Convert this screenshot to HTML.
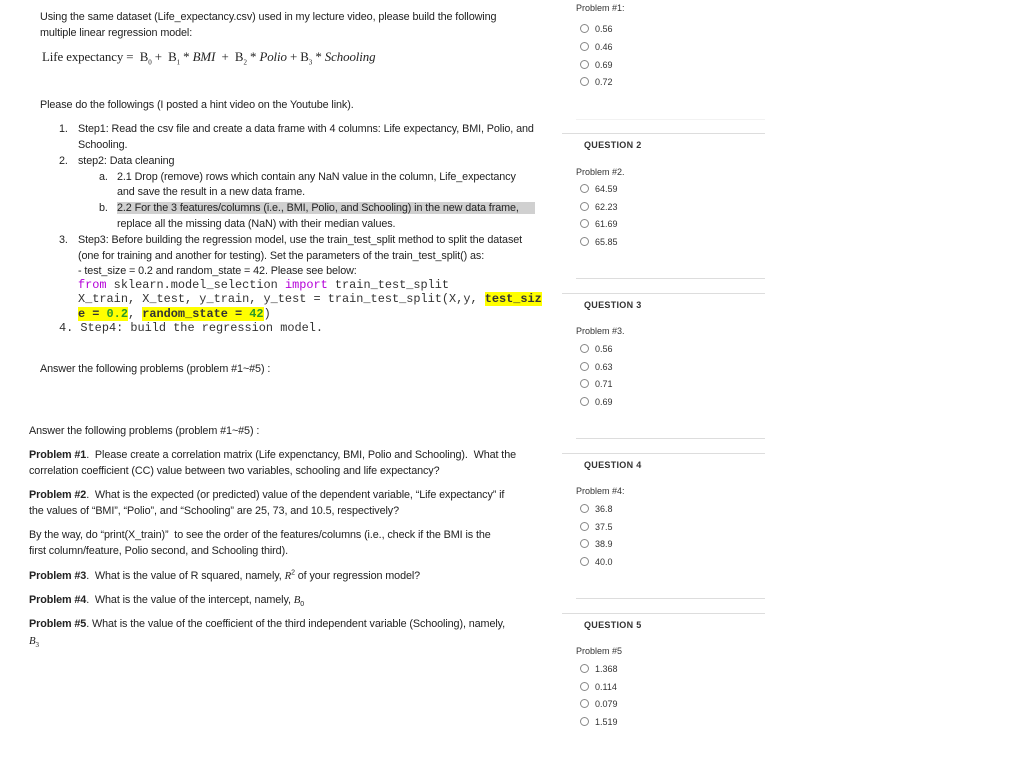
<!DOCTYPE html>
<html><head><meta charset="utf-8"><style>
body{margin:0;width:1024px;height:768px;background:#fff;position:relative;overflow:hidden;font-family:"Liberation Sans",sans-serif;color:#222}
.t{position:absolute;white-space:nowrap;font-size:10.8px;line-height:12px;color:#222;letter-spacing:-0.1px}
.m{position:absolute;white-space:nowrap;font-family:"Liberation Mono",monospace;font-size:11.9px;line-height:13px;color:#333}
.r{position:absolute;white-space:nowrap;font-size:9px;line-height:11px;color:#333}
.q{position:absolute;white-space:nowrap;font-size:9px;font-weight:bold;color:#333;letter-spacing:.3px}
.rad{display:inline-block;width:7px;height:7px;border:1px solid #888;border-radius:50%;vertical-align:-1px;margin-right:6px}
.ln{position:absolute;height:1px;background:#ddd}
.hl{background:#d0d0d0}
.y{background:#ffff00;font-weight:bold}
.p{color:#b400d8}.g{color:#2a9a2a}
.f{font-family:"Liberation Serif",serif}
sub,sup{font-size:7px;line-height:0}
</style></head><body>
<div class="t" style="left:40px;top:11px">Using the same dataset (Life_expectancy.csv) used in my lecture video, please build the following</div>
<div class="t" style="left:40px;top:27px">multiple linear regression model:</div>
<div class="t f" style="left:42px;top:50px;font-size:12.9px;line-height:14px">Life expectancy =&nbsp; B<sub>0</sub> + &nbsp;B<sub>1</sub> * <i>BMI</i> &nbsp;+ &nbsp;B<sub>2</sub> * <i>Polio</i> + B<sub>3</sub> * <i>Schooling</i></div>
<div class="t" style="left:40px;top:99px">Please do the followings (I posted a hint video on the Youtube link).</div>
<div class="t" style="left:59px;top:123px">1.</div><div class="t" style="left:78px;top:123px">Step1: Read the csv file and create a data frame with 4 columns: Life expectancy, BMI, Polio, and</div>
<div class="t" style="left:78px;top:139px">Schooling.</div>
<div class="t" style="left:59px;top:155px">2.</div><div class="t" style="left:78px;top:155px">step2: Data cleaning</div>
<div class="t" style="left:99px;top:171px">a.</div><div class="t" style="left:117px;top:171px">2.1 Drop (remove) rows which contain any NaN value in the column, Life_expectancy</div>
<div class="t" style="left:117px;top:186px">and save the result in a new data frame.</div>
<div class="t" style="left:99px;top:202px">b.</div><div class="t hl" style="left:117px;top:202px;width:418px">2.2 For the 3 features/columns (i.e., BMI, Polio, and Schooling) in the new data frame,</div>
<div class="t" style="left:117px;top:218px">replace all the missing data (NaN) with their median values.</div>
<div class="t" style="left:59px;top:234px">3.</div><div class="t" style="left:78px;top:234px">Step3: Before building the regression model, use the train_test_split method to split the dataset</div>
<div class="t" style="left:78px;top:250px">(one for training and another for testing). Set the parameters of the train_test_split() as:</div>
<div class="t" style="left:78px;top:265px">- test_size = 0.2 and random_state = 42. Please see below:</div>
<div class="m" style="left:78px;top:279px"><span class="p">from</span> sklearn.model_selection <span class="p">import</span> train_test_split</div>
<div class="m" style="left:78px;top:293px">X_train, X_test, y_train, y_test = train_test_split(X,y, <span class="y">test_siz</span></div>
<div class="m" style="left:78px;top:308px"><span class="y">e = <span class="g">0.2</span></span>, <span class="y">random_state = <span class="g">42</span></span>)</div>
<div class="m" style="left:59px;top:322px">4. Step4: build the regression model.</div>
<div class="t" style="left:40px;top:363px">Answer the following problems (problem #1~#5) :</div>
<div class="t" style="left:29px;top:425px">Answer the following problems (problem #1~#5) :</div>
<div class="t" style="left:29px;top:449px"><b>Problem #1</b>.&nbsp; Please create a correlation matrix (Life expenctancy, BMI, Polio and Schooling).&nbsp; What the</div>
<div class="t" style="left:29px;top:465px">correlation coefficient (CC) value between two variables, schooling and life expectancy?</div>
<div class="t" style="left:29px;top:489px"><b>Problem #2</b>.&nbsp; What is the expected (or predicted) value of the dependent variable, “Life expectancy” if</div>
<div class="t" style="left:29px;top:505px">the values of “BMI”, “Polio”, and “Schooling” are 25, 73, and 10.5, respectively?</div>
<div class="t" style="left:29px;top:529px">By the way, do “print(X_train)”&nbsp; to see the order of the features/columns (i.e., check if the BMI is the</div>
<div class="t" style="left:29px;top:545px">first column/feature, Polio second, and Schooling third).</div>
<div class="t" style="left:29px;top:570px"><b>Problem #3</b>.&nbsp; What is the value of R squared, namely, <i class="f">R</i><sup>2</sup> of your regression model?</div>
<div class="t" style="left:29px;top:594px"><b>Problem #4</b>.&nbsp; What is the value of the intercept, namely, <i class="f">B</i><sub>0</sub></div>
<div class="t" style="left:29px;top:618px"><b>Problem #5</b>. What is the value of the coefficient of the third independent variable (Schooling), namely,</div>
<div class="t f" style="left:29px;top:635px"><i>B</i><sub>3</sub></div>

<div class="r" style="left:576px;top:3px">Problem #1:</div>
<div class="r" style="left:580px;top:24px"><span class="rad"></span>0.56</div>
<div class="r" style="left:580px;top:42px"><span class="rad"></span>0.46</div>
<div class="r" style="left:580px;top:60px"><span class="rad"></span>0.69</div>
<div class="r" style="left:580px;top:77px"><span class="rad"></span>0.72</div>
<div class="ln" style="left:576px;top:119px;width:189px;background:#f2f2f2"></div>
<div class="ln" style="left:562px;top:133px;width:203px"></div>
<div class="q" style="left:584px;top:140px">QUESTION 2</div>
<div class="r" style="left:576px;top:167px">Problem #2.</div>
<div class="r" style="left:580px;top:184px"><span class="rad"></span>64.59</div>
<div class="r" style="left:580px;top:202px"><span class="rad"></span>62.23</div>
<div class="r" style="left:580px;top:219px"><span class="rad"></span>61.69</div>
<div class="r" style="left:580px;top:237px"><span class="rad"></span>65.85</div>
<div class="ln" style="left:576px;top:278px;width:189px"></div>
<div class="ln" style="left:562px;top:293px;width:203px"></div>
<div class="q" style="left:584px;top:300px">QUESTION 3</div>
<div class="r" style="left:576px;top:326px">Problem #3.</div>
<div class="r" style="left:580px;top:344px"><span class="rad"></span>0.56</div>
<div class="r" style="left:580px;top:362px"><span class="rad"></span>0.63</div>
<div class="r" style="left:580px;top:379px"><span class="rad"></span>0.71</div>
<div class="r" style="left:580px;top:397px"><span class="rad"></span>0.69</div>
<div class="ln" style="left:576px;top:438px;width:189px"></div>
<div class="ln" style="left:562px;top:453px;width:203px"></div>
<div class="q" style="left:584px;top:460px">QUESTION 4</div>
<div class="r" style="left:576px;top:486px">Problem #4:</div>
<div class="r" style="left:580px;top:504px"><span class="rad"></span>36.8</div>
<div class="r" style="left:580px;top:522px"><span class="rad"></span>37.5</div>
<div class="r" style="left:580px;top:539px"><span class="rad"></span>38.9</div>
<div class="r" style="left:580px;top:557px"><span class="rad"></span>40.0</div>
<div class="ln" style="left:576px;top:598px;width:189px"></div>
<div class="ln" style="left:562px;top:613px;width:203px"></div>
<div class="q" style="left:584px;top:620px">QUESTION 5</div>
<div class="r" style="left:576px;top:646px">Problem #5</div>
<div class="r" style="left:580px;top:664px"><span class="rad"></span>1.368</div>
<div class="r" style="left:580px;top:682px"><span class="rad"></span>0.114</div>
<div class="r" style="left:580px;top:699px"><span class="rad"></span>0.079</div>
<div class="r" style="left:580px;top:717px"><span class="rad"></span>1.519</div>
</body></html>
